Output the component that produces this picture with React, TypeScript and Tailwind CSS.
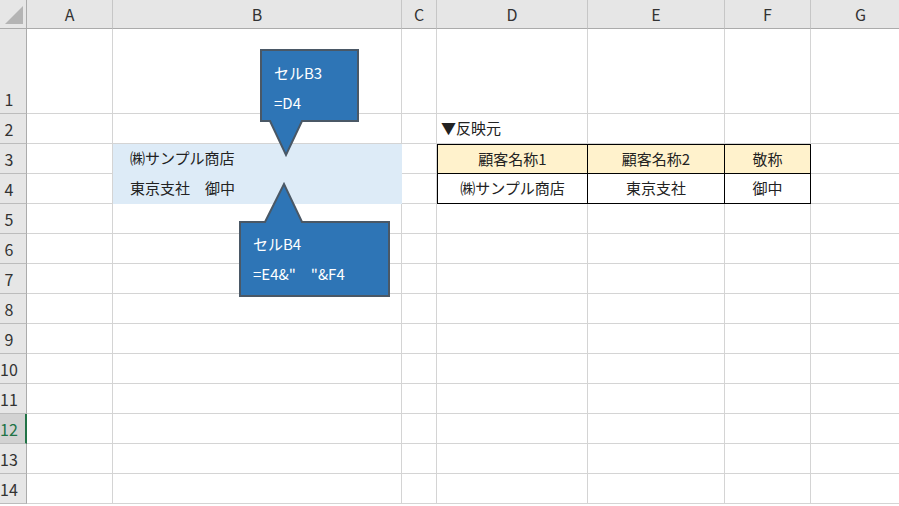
import React from "react";

const cols = ["A", "B", "C", "D", "E", "F", "G"];
const colW = [86, 289, 35, 151, 137, 86, 100];
const rows = Array.from({ length: 14 }, (_, i) => i + 1);

function cellContent(r: number, c: number): { node?: React.ReactNode; cls: string } {
  const base = "border-r border-b border-[#d4d4d4]";
  if (c === 1 && (r === 3 || r === 4)) {
    return {
      cls: "bg-[#ddebf7] border-r border-b border-[#ddebf7] flex items-center pl-[17px]",
      node: r === 3 ? "㈱サンプル商店" : "東京支社　御中",
    };
  }
  if (r === 2 && c === 3) return { cls: base + " flex items-center pl-[4px]", node: "▼反映元" };
  if (r === 3 && c >= 3 && c <= 5) {
    const t = ["顧客名称1", "顧客名称2", "敬称"][c - 3];
    return {
      cls:
        "bg-[#fff2cc] border-t border-b border-r border-black flex items-center justify-center " +
        (c === 3 ? "border-l" : ""),
      node: t,
    };
  }
  if (r === 4 && c >= 3 && c <= 5) {
    const t = ["㈱サンプル商店", "東京支社", "御中"][c - 3];
    return {
      cls: "border-b border-r border-black flex items-center justify-center " + (c === 3 ? "border-l" : ""),
      node: t,
    };
  }
  return { cls: base };
}

export default function App() {
  return (
    <div
      className="relative w-[899px] h-[506px] overflow-hidden bg-white text-[15px] text-[#222]"
      style={{ fontFamily: '"Noto Sans CJK JP", "Noto Sans", sans-serif' }}
    >
      <div className="flex h-[29px]">
        <div className="w-[27px] shrink-0 bg-[#e6e6e6] border-r border-b border-[#ababab] relative">
          <svg className="absolute left-[4px] top-[5px]" width="20" height="20" viewBox="0 0 20 20">
            <path d="M19 1 L19 19 L1 19 Z" fill="#b4b4b4" />
          </svg>
        </div>
        {cols.map((c, i) => (
          <div
            key={c}
            style={{ width: colW[i] }}
            className="shrink-0 bg-[#e6e6e6] border-r border-b border-r-[#c6c6c6] border-b-[#ababab] flex items-center justify-center text-[16px] text-[#333]"
          >
            {c}
          </div>
        ))}
      </div>
      {rows.map((r) => (
        <div key={r} className={r === 1 ? "flex h-[85px]" : "flex h-[30px]"}>
          <div
            className={
              r === 12
                ? "w-[27px] shrink-0 bg-[#d2d2d2] border-r-2 border-b border-r-[#217346] border-b-[#bcbcbc] text-[#217346] flex items-end pb-[3px]"
                : "w-[27px] shrink-0 bg-[#e6e6e6] border-r border-b border-r-[#ababab] border-b-[#bcbcbc] text-[#333] flex items-end pb-[3px]"
            }
          >
            <span className="w-[18px] text-center text-[16px] leading-[22px]">{r}</span>
          </div>
          {cols.map((_, c) => {
            const { cls, node } = cellContent(r, c);
            return (
              <div key={c} style={{ width: colW[c] }} className={"shrink-0 whitespace-nowrap " + cls}>
                {node}
              </div>
            );
          })}
        </div>
      ))}

      <svg className="absolute left-0 top-0" width="899" height="506">
        <path d="M261 50 H358 V121 H302 L286 155 L270 121 H261 Z" fill="#2e75b6" stroke="#4a5866" strokeWidth="2" />
        <path d="M240 222 H265 L284 184 L302 222 H389 V296 H240 Z" fill="#2e75b6" stroke="#4a5866" strokeWidth="2" />
      </svg>
      <div className="absolute left-[274px] top-[58px] text-white leading-[30px] text-[15px]">
        <div>セルB3</div>
        <div>=D4</div>
      </div>
      <div className="absolute left-[253px] top-[229px] text-white leading-[30px] text-[15px] whitespace-pre">
        <div>セルB4</div>
        <div>=E4&amp;"　"&amp;F4</div>
      </div>
    </div>
  );
}
